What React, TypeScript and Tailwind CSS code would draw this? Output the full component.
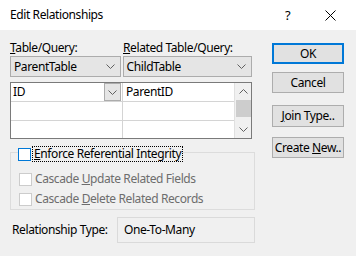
import React from 'react';

const font = { fontFamily: '"Noto Sans", "Liberation Sans", sans-serif' };

function Chevron({ className = '' }: { className?: string }) {
  return (
    <svg width="9" height="5" viewBox="0 0 9 5" className={className}>
      <path d="M0.5 0.5 L4.5 4.5 L8.5 0.5" fill="none" stroke="#606060" strokeWidth="1" />
    </svg>
  );
}

function Combo({ text, className = '' }: { text: string; className?: string }) {
  return (
    <div className={`h-[21px] flex items-center justify-between border border-[#acacac] bg-[#e5e5e5] pl-[3px] pr-[5px] ${className}`}>
      <span className="text-[#000]">{text}</span>
      <Chevron />
    </div>
  );
}

function Check({ label, under, rest, disabled, focused }: { label: string; under: string; rest: string; disabled?: boolean; focused?: boolean }) {
  return (
    <div className="flex items-center h-[14px] whitespace-nowrap">
      <div className={`w-[13px] h-[13px] border bg-white ${disabled ? 'border-[#cccccc]' : 'border-[#0078d7]'}`} />
      <span className={`ml-[2px] px-[1px] leading-[14px] ${disabled ? 'text-[#6d6d6d]' : 'text-black'} ${focused ? 'outline-1 outline-dotted outline-black' : ''}`}>
        {label}
        <span className="underline">{under}</span>
        {rest}
      </span>
    </div>
  );
}

function Btn({ children, primary, className = '' }: { children: React.ReactNode; primary?: boolean; className?: string }) {
  return (
    <div
      className={`w-[72px] h-[21px] flex items-center justify-center whitespace-nowrap bg-[#e1e1e1] border ${
        primary ? 'border-[#0078d7] shadow-[inset_0_0_0_1px_#0078d7]' : 'border-[#adadad]'
      } ${className}`}
    >
      {children}
    </div>
  );
}

export default function App() {
  return (
    <div className="w-[356px] h-[256px] bg-[#f0f0f0] text-[12px] tracking-[-0.4px] text-black overflow-hidden" style={font}>
      <div className="h-[30px] bg-white flex items-center pl-[10px] relative">
        <span>Edit Relationships</span>
        <span className="absolute left-[285px] top-[6px] text-[13px]">?</span>
        <svg className="absolute left-[325px] top-[10px]" width="11" height="11" viewBox="0 0 11 11">
          <path d="M0.5 0.5 L10.5 10.5 M10.5 0.5 L0.5 10.5" stroke="#000" strokeWidth="1" />
        </svg>
      </div>

      <div className="flex">
        <div className="ml-[10px] w-[245px] flex flex-col">
          <div className="flex mt-[10px] h-[16px] items-center">
            <span className="w-[113px]"><span className="underline">T</span>able/Query:</span>
            <span><span className="underline">R</span>elated Table/Query:</span>
          </div>
          <div className="flex w-[242px]">
            <Combo text="ParentTable" className="w-[111px]" />
            <Combo text="ChildTable" className="w-[130px] ml-[2px]" />
          </div>

          <div className="mt-[5px] w-[242px] h-[57px] border border-[#7a7a7a] bg-white flex">
            <div className="flex-1 flex flex-col">
              <div className="h-[19px] flex border-b border-[#d4d4d4]">
                <div className="w-[112px] flex items-center justify-between border-r border-[#d4d4d4] pl-[2px]">
                  <span>ID</span>
                  <div className="w-[17px] h-[18px] bg-[#e5e5e5] border border-[#acacac] flex items-center justify-center mr-[1px]">
                    <Chevron />
                  </div>
                </div>
                <div className="flex-1 flex items-center pl-[3px]">ParentID</div>
              </div>
              <div className="h-[19px] flex border-b border-[#d4d4d4]">
                <div className="w-[112px] border-r border-[#d4d4d4]" />
              </div>
              <div className="flex-1 flex">
                <div className="w-[112px] border-r border-[#d4d4d4]" />
              </div>
            </div>
            <div className="w-[17px] bg-[#f0f0f0] flex flex-col items-center border-l border-[#e0e0e0]">
              <div className="h-[17px] flex items-center justify-center">
                <Chevron className="rotate-180" />
              </div>
              <div className="w-[15px] h-[17px] bg-[#cdcdcd]" />
              <div className="flex-1" />
              <div className="h-[17px] flex items-center justify-center">
                <Chevron />
              </div>
            </div>
          </div>

          <div className="mt-[8px] relative flex flex-col">
            <div className="absolute left-[8px] top-[0px] bg-[#f0f0f0] z-10">
              <Check label="" under="E" rest="nforce Referential Integrity" focused />
            </div>
            <div className="mt-[5px] w-[245px] h-[58px] border border-[#dcdcdc] pt-[19px] pl-[8px] flex flex-col gap-[6px]">
              <Check label="Cascade " under="U" rest="pdate Related Fields" disabled />
              <Check label="Cascade " under="D" rest="elete Related Records" disabled />
            </div>
          </div>

          <div className="flex items-center mt-[7px]">
            <span className="ml-[2px] w-[105px]">Relationship Type:</span>
            <div className="w-[138px] h-[26px] border border-[#dadada] flex items-center pl-[6px]">One-To-Many</div>
          </div>
        </div>

        <div className="ml-[17px] mt-[13px] flex flex-col">
          <Btn primary>OK</Btn>
          <Btn className="mt-[8px]">Cancel</Btn>
          <Btn className="mt-[12px] h-[22px]">
            <span><span className="underline">J</span>oin Type..</span>
          </Btn>
          <Btn className="mt-[10px]">
            <span>Create <span className="underline">N</span>ew..</span>
          </Btn>
        </div>
      </div>
    </div>
  );
}
